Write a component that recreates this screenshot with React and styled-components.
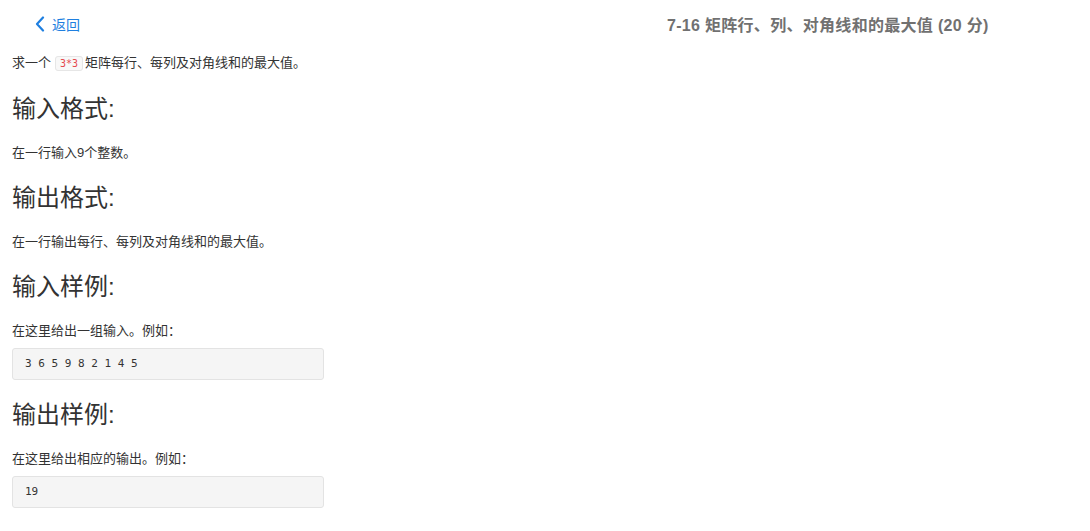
import React from "react";
import styled, { createGlobalStyle } from "styled-components";

const Global = createGlobalStyle`
  html, body { margin: 0; padding: 0; background: #fff; }
  body {
    font-family: "Liberation Sans", "Noto Sans CJK SC", sans-serif;
    color: #333;
    -webkit-font-smoothing: antialiased;
  }
`;

const Page = styled.div`
  width: 1090px;
  min-height: 531px;
  box-sizing: border-box;
  padding: 0 12px;
`;

const Header = styled.header`
  height: 48px;
  display: flex;
  align-items: center;
`;

const Back = styled.a`
  display: flex;
  align-items: center;
  gap: 7px;
  margin-left: 23px;
  color: #1e7fe0;
  font-size: 14px;
  text-decoration: none;
  cursor: pointer;
  width: 220px;
`;

const Title = styled.h1`
  margin: 0 0 0 412px;
  font-size: 16px;
  letter-spacing: 0.3px;
  font-weight: bold;
  color: #717171;
  white-space: nowrap;
`;

const Para = styled.p`
  margin: 0 0 7px;
  font-size: 13px;
  line-height: 20px;
`;

const FirstPara = styled(Para)`
  margin-top: 5px;
`;

const Heading = styled.h3`
  margin: 22px 0 21px;
  font-size: 24px;
  line-height: 26px;
  font-weight: normal;
  color: #333;
`;

const InlineCode = styled.code`
  font-family: "DejaVu Sans Mono", "Liberation Mono", monospace;
  font-size: 10px;
  color: #e5484d;
  background: #f8f8f8;
  border: 1px solid #e6e6e6;
  border-radius: 3px;
  padding: 1px 4px;
  margin: 0 2px 0 4px;
`;

const Pre = styled.pre`
  width: 312px;
  box-sizing: border-box;
  margin: 0 0 10px;
  padding: 8px 12px;
  font-family: "DejaVu Sans Mono", "Liberation Mono", monospace;
  font-size: 11px;
  line-height: 14px;
  color: #333;
  background: #f5f5f5;
  border: 1px solid #e3e3e3;
  border-radius: 3px;
`;

const Chevron = () => (
  <svg width="10" height="16" viewBox="0 0 10 16" fill="none">
    <path d="M8 1.5 L2 8 L8 14.5" stroke="#1e7fe0" strokeWidth="2.2" strokeLinecap="round" strokeLinejoin="round" />
  </svg>
);

export default function App() {
  return (
    <Page>
      <Global />
      <Header>
        <Back>
          <Chevron />
          返回
        </Back>
        <Title>7-16 矩阵行、列、对角线和的最大值 (20 分)</Title>
      </Header>
      <FirstPara>
        求一个<InlineCode>3*3</InlineCode>矩阵每行、每列及对角线和的最大值。
      </FirstPara>
      <Heading>输入格式:</Heading>
      <Para>在一行输入9个整数。</Para>
      <Heading>输出格式:</Heading>
      <Para>在一行输出每行、每列及对角线和的最大值。</Para>
      <Heading>输入样例:</Heading>
      <Para>在这里给出一组输入。例如：</Para>
      <Pre>3 6 5 9 8 2 1 4 5</Pre>
      <Heading>输出样例:</Heading>
      <Para>在这里给出相应的输出。例如：</Para>
      <Pre>19</Pre>
    </Page>
  );
}
